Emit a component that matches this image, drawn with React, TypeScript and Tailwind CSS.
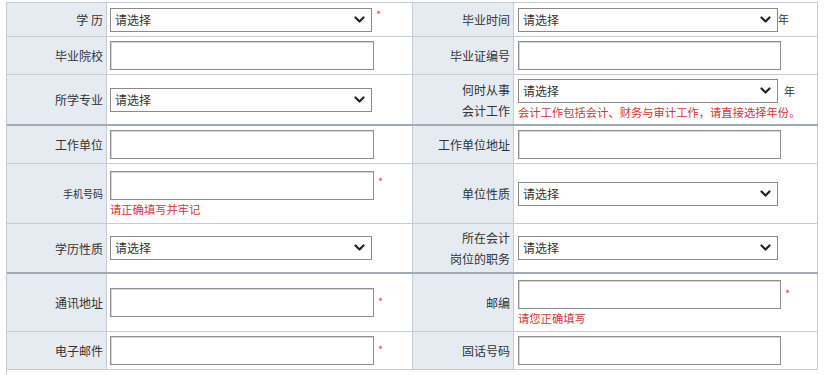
import React from "react";

const FONT = { fontFamily: '"Noto Sans CJK SC", "Noto Sans", sans-serif' };

function Chevron() {
  return (
    <svg width="11" height="8" viewBox="0 0 11 8" className="shrink-0">
      <path d="M1.5 1.5 L5.5 5.5 L9.5 1.5" fill="none" stroke="#222" strokeWidth="2.2" strokeLinecap="round" strokeLinejoin="round" />
    </svg>
  );
}

function Select({ w }: { w: string }) {
  return (
    <div className={`flex h-[24px] ${w} shrink-0 items-center justify-between border border-[#8a8a8a] bg-white pl-[4px] pr-[6px] text-[12px] text-[#333]`}>
      <span>请选择</span>
      <Chevron />
    </div>
  );
}

function Input({ w }: { w: string }) {
  return <div className={`h-[29px] ${w} shrink-0 border border-[#8f8f8f] bg-white shadow-[inset_1px_1px_0_#d6d6d6]`} />;
}

function Star({ mt }: { mt: string }) {
  return <span className={`ml-[4px] self-start ${mt} text-[11px] leading-none text-[#e0494f]`}>*</span>;
}

function Hint({ children }: { children: React.ReactNode }) {
  return <div className="mt-[2px] whitespace-nowrap text-[11.3px] leading-[15px] text-[#d2343c]">{children}</div>;
}

function Label({ children, small }: { children: React.ReactNode; small?: boolean }) {
  return (
    <div
      className={`flex items-center justify-end border-r border-[#c6ccd4] bg-[#e6ebf2] pr-[3px] text-right ${small ? "text-[10px]" : "text-[12px]"} leading-[21px] text-[#333]`}
    >
      {children}
    </div>
  );
}

function Row({ h, dark, children }: { h: string; dark?: boolean; children: React.ReactNode }) {
  return (
    <div
      className={`grid ${h} grid-cols-[100px_306px_101px_304px] ${dark ? "border-b-2 border-[#a3aab3]" : "border-b border-[#c6ccd4]"}`}
    >
      {children}
    </div>
  );
}

function LVal({ children }: { children: React.ReactNode }) {
  return <div className="flex items-center border-r border-[#c6ccd4] bg-white pl-[3px]">{children}</div>;
}
function RVal({ children }: { children: React.ReactNode }) {
  return <div className="flex items-center border-r border-[#c6ccd4] bg-white pl-[4px]">{children}</div>;
}

export default function App() {
  return (
    <div className="h-[375px] w-[827px] overflow-hidden bg-white" style={FONT}>
      <div className="ml-[6px] mt-[2px] w-[812px] border-l border-t border-[#c6ccd4]">
        {/* Row 1 */}
        <Row h="h-[34px]">
          <Label>学 历</Label>
          <LVal>
            <Select w="w-[262px]" />
            <Star mt="mt-[6px]" />
          </LVal>
          <Label>毕业时间</Label>
          <RVal>
            <Select w="w-[260px]" />
            <span className="text-[11px] text-[#333]">年</span>
          </RVal>
        </Row>
        {/* Row 2 */}
        <Row h="h-[38px]">
          <Label>毕业院校</Label>
          <LVal>
            <Input w="w-[264px]" />
          </LVal>
          <Label>毕业证编号</Label>
          <RVal>
            <Input w="w-[263px]" />
          </RVal>
        </Row>
        {/* Row 3 */}
        <Row h="h-[51px]" dark>
          <Label>所学专业</Label>
          <LVal>
            <Select w="w-[262px]" />
          </LVal>
          <Label>
            何时从事
            <br />
            会计工作
          </Label>
          <RVal>
            <div className="flex flex-col">
              <div className="flex items-center">
                <Select w="w-[260px]" />
                <span className="ml-[6px] text-[11px] text-[#333]">年</span>
              </div>
              <Hint>会计工作包括会计、财务与审计工作，请直接选择年份。</Hint>
            </div>
          </RVal>
        </Row>
        {/* Row 4 */}
        <Row h="h-[38px]">
          <Label>工作单位</Label>
          <LVal>
            <Input w="w-[264px]" />
          </LVal>
          <Label>工作单位地址</Label>
          <RVal>
            <Input w="w-[263px]" />
          </RVal>
        </Row>
        {/* Row 5 */}
        <Row h="h-[60px]">
          <Label small>手机号码</Label>
          <LVal>
            <div className="flex flex-col">
              <div className="flex">
                <Input w="w-[264px]" />
                <Star mt="mt-[5px]" />
              </div>
              <Hint>请正确填写并牢记</Hint>
            </div>
          </LVal>
          <Label>单位性质</Label>
          <RVal>
            <Select w="w-[260px]" />
          </RVal>
        </Row>
        {/* Row 6 */}
        <Row h="h-[50px]" dark>
          <Label>学历性质</Label>
          <LVal>
            <Select w="w-[262px]" />
          </LVal>
          <Label>
            所在会计
            <br />
            岗位的职务
          </Label>
          <RVal>
            <Select w="w-[260px]" />
          </RVal>
        </Row>
        {/* Row 7 */}
        <Row h="h-[58px]">
          <Label>通讯地址</Label>
          <LVal>
            <div className="flex">
              <Input w="w-[264px]" />
              <Star mt="mt-[8px]" />
            </div>
          </LVal>
          <Label>邮编</Label>
          <RVal>
            <div className="flex flex-col">
              <div className="flex">
                <Input w="w-[263px]" />
                <Star mt="mt-[8px]" />
              </div>
              <Hint>请您正确填写</Hint>
            </div>
          </RVal>
        </Row>
        {/* Row 8 */}
        <Row h="h-[38px]">
          <Label>电子邮件</Label>
          <LVal>
            <div className="flex">
              <Input w="w-[264px]" />
              <Star mt="mt-[8px]" />
            </div>
          </LVal>
          <Label>固话号码</Label>
          <RVal>
            <Input w="w-[263px]" />
          </RVal>
        </Row>
        <div className="h-[6px]" />
      </div>
    </div>
  );
}
